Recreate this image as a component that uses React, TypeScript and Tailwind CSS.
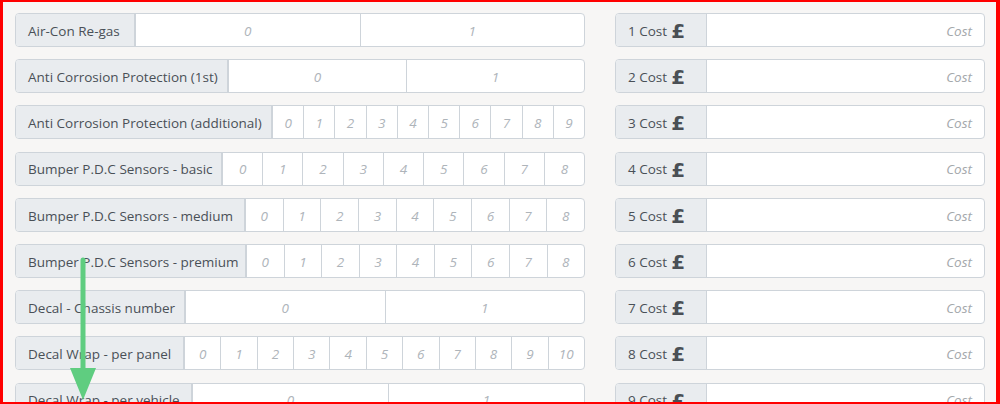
import React from "react";

const rows: { label: string; w: string; n: number }[] = [
  { label: "Air-Con Re-gas", w: "w-[119px]", n: 2 },
  { label: "Anti Corrosion Protection (1st)", w: "w-[212px]", n: 2 },
  { label: "Anti Corrosion Protection (additional)", w: "w-[256px]", n: 10 },
  { label: "Bumper P.D.C Sensors - basic", w: "w-[206px]", n: 9 },
  { label: "Bumper P.D.C Sensors - medium", w: "w-[229px]", n: 9 },
  { label: "Bumper P.D.C Sensors - premium", w: "w-[230px]", n: 9 },
  { label: "Decal - Chassis number", w: "w-[169px]", n: 2 },
  { label: "Decal Wrap - per panel", w: "w-[168px]", n: 11 },
  { label: "Decal Wrap - per vehicle", w: "w-[176px]", n: 2 },
];

function OptionRow({ label, w, n }: { label: string; w: string; n: number }) {
  return (
    <div className="flex h-[34px] rounded-[4px] border border-[#ced4da] overflow-hidden bg-white">
      <div className={`${w} shrink-0 flex items-center pl-[12px] pt-[2px] bg-[#e9ecef] border-r border-[#ced4da] text-[#495057] text-[13.5px] whitespace-nowrap`}>
        {label}
      </div>
      {Array.from({ length: n }, (_, i) => (
        <div
          key={i}
          className="flex-1 flex items-center justify-center pt-[2px] italic text-[13.5px] text-[#aeb4ba] border-l border-[#ced4da] first:border-l-0"
        >
          {i}
        </div>
      ))}
    </div>
  );
}

function CostRow({ i }: { i: number }) {
  return (
    <div className="flex h-[34px] rounded-[4px] border border-[#ced4da] overflow-hidden bg-white">
      <div className="w-[91px] shrink-0 flex items-center pl-[12px] pt-[2px] gap-[4px] bg-[#e9ecef] border-r border-[#ced4da] text-[#495057] text-[13.5px] whitespace-nowrap">
        <span>{i} Cost</span>
        <span className="text-[20px] font-bold text-[#4a4f55] leading-none" style={{ fontFamily: '"DejaVu Sans", sans-serif' }}>£</span>
      </div>
      <div className="flex-1 flex items-center justify-end pr-[12px] pt-[2px] italic text-[13.5px] text-[#a4a8ac]">
        Cost
      </div>
    </div>
  );
}

export default function App() {
  return (
    <div
      className="relative h-[404px] w-[1000px] overflow-hidden bg-[#f7f6f5]"
      style={{ fontFamily: '"Open Sans", "Noto Sans", sans-serif' }}
    >
      <div className="flex gap-[30px] px-[15px] pt-[13px]">
        <div className="w-[570px] flex flex-col gap-[12.2px]">
          {rows.map((r) => (
            <OptionRow key={r.label} {...r} />
          ))}
        </div>
        <div className="w-[370px] flex flex-col gap-[12.2px]">
          {rows.map((_, i) => (
            <CostRow key={i} i={i + 1} />
          ))}
        </div>
      </div>
      <svg className="absolute left-[60px] top-[250px]" width="50" height="154" viewBox="0 0 50 154">
        <line x1="23" y1="10" x2="23" y2="120" stroke="#5fcd80" strokeWidth="5" strokeLinecap="round" />
        <polygon points="10,118 36,118 23,150" fill="#5fcd80" />
      </svg>
      <div className="absolute inset-0 border-t-2 border-b-2 border-l-[3px] border-r-[4px] border-[#ff0000] pointer-events-none" />
    </div>
  );
}
